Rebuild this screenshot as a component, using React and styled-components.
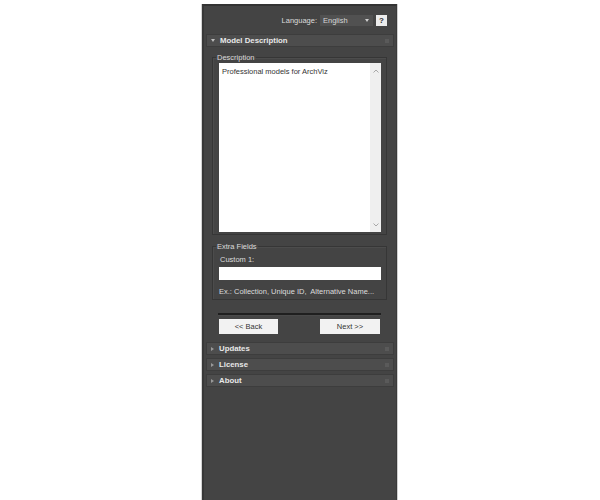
import React from 'react';
import styled, { createGlobalStyle } from 'styled-components';

const GlobalStyle = createGlobalStyle`
  body {
    margin: 0;
    background: #ffffff;
    font-family: "Liberation Sans", Arial, sans-serif;
  }
`;

const Page = styled.div`
  width: 600px;
  height: 500px;
  display: flex;
  padding-left: 202px;
  box-sizing: border-box;
  overflow: hidden;
`;

const Panel = styled.div`
  width: 192px;
  height: 494px;
  margin-top: 4px;
  background: #444444;
  border-top: 2px solid #333333;
  border-left: 2px solid #383838;
  border-right: 1px solid #3a3a3a;
  box-shadow: -1px 0 0 #d4d4d4, 1px 0 0 #cfcfcf;
  display: flex;
  flex-direction: column;
  color: #dcdcdc;
  font-size: 7.5px;
`;

const LangRow = styled.div`
  display: flex;
  justify-content: flex-end;
  align-items: center;
  gap: 3px;
  height: 12px;
  padding: 8px 9px 0 0;
`;

const Select = styled.div`
  width: 53px;
  height: 11px;
  background: #515151;
  display: flex;
  align-items: center;
  justify-content: space-between;
  padding: 0 4px 0 3px;
  box-sizing: border-box;
  color: #d6d6d6;
`;

const Caret = styled.span`
  width: 0;
  height: 0;
  border-left: 2px solid transparent;
  border-right: 2px solid transparent;
  border-top: 3px solid #cfcfcf;
`;

const HelpButton = styled.div`
  width: 11px;
  height: 11px;
  background: #ececec;
  color: #2b2b2b;
  font-weight: bold;
  font-size: 8px;
  display: flex;
  align-items: center;
  justify-content: center;
`;

const Rollout = styled.div`
  margin: ${({ $top }) => $top}px 2px 0 2px;
`;

const RolloutHeader = styled.div`
  height: 13px;
  background: #4d4d4d;
  border: 1px solid #3d3d3d;
  box-sizing: border-box;
  display: flex;
  align-items: center;
  padding: 0 4px 0 4px;
  gap: 5px;
  font-weight: bold;
  font-size: 7.8px;
  color: #e8e8e8;
`;

const Arrow = styled.span`
  width: 0;
  height: 0;
  ${({ $open }) =>
    $open
      ? `border-left: 2px solid transparent; border-right: 2px solid transparent; border-top: 3px solid #bdbdbd;`
      : `border-top: 2px solid transparent; border-bottom: 2px solid transparent; border-left: 3px solid #9a9a9a;`}
`;

const HeaderTitle = styled.span`
  flex: 1;
`;

const Pin = styled.span`
  width: 4px;
  height: 4px;
  background: #5a5a5a;
`;

const RolloutBody = styled.div`
  padding: 6px 7px 0 6px;
  display: flex;
  flex-direction: column;
`;

const Group = styled.fieldset`
  margin: 0 0 ${({ $gap }) => $gap || 0}px 0;
  padding: 1px 5px ${({ $pb }) => $pb || 2}px 6px;
  border: 1px solid #363636;
  box-shadow: inset 1px 1px 0 #4c4c4c;
  min-width: 0;
  display: flex;
  flex-direction: column;
`;

const Legend = styled.legend`
  padding: 0 1px;
  margin-left: -3px;
  font-size: 7.5px;
  color: #dadada;
`;

const TextArea = styled.div`
  height: 169px;
  background: #ffffff;
  display: flex;
  color: #333333;
`;

const TextContent = styled.div`
  flex: 1;
  padding: 4px 3px;
`;

const ScrollBar = styled.div`
  width: 11px;
  background: #efefef;
  display: flex;
  flex-direction: column;
  justify-content: space-between;
  align-items: center;
  padding: 6px 0 5px;
`;

const Chevron = ({ down }) => (
  <svg width="6" height="4" viewBox="0 0 6 4">
    <path
      d={down ? 'M0.5 0.5 L3 3 L5.5 0.5' : 'M0.5 3.5 L3 1 L5.5 3.5'}
      fill="none"
      stroke="#a8a8a8"
      strokeWidth="1"
    />
  </svg>
);

const FieldLabel = styled.div`
  margin: 3px 0 3px 1px;
`;

const Input = styled.div`
  height: 13px;
  background: #ffffff;
`;

const Hint = styled.div`
  margin: 7px 0 0 0;
`;

const Separator = styled.div`
  height: 2px;
  margin: 13px 13px 0 12px;
  background: #1f1f1f;
  border-bottom: 1px solid #4a4a4a;
`;

const ButtonRow = styled.div`
  display: flex;
  justify-content: space-between;
  margin: 3px 14px 0 13px;
`;

const Button = styled.div`
  width: ${({ $w }) => $w}px;
  height: 15px;
  background: #f2f2f2;
  color: #333333;
  display: flex;
  align-items: center;
  justify-content: center;
`;

const collapsed = ['Updates', 'License', 'About'];

const App = () => {
  return (
    <Page>
      <GlobalStyle />
      <Panel>
        <LangRow>
          <span>Language:</span>
          <Select>
            <span>English</span>
            <Caret />
          </Select>
          <HelpButton>?</HelpButton>
        </LangRow>

        <Rollout $top={8}>
          <RolloutHeader>
            <Arrow $open />
            <HeaderTitle>Model Description</HeaderTitle>
            <Pin />
          </RolloutHeader>
          <RolloutBody>
            <Group $gap={7}>
              <Legend>Description</Legend>
              <TextArea>
                <TextContent>Professional models for ArchViz</TextContent>
                <ScrollBar>
                  <Chevron />
                  <Chevron down />
                </ScrollBar>
              </TextArea>
            </Group>
            <Group $pb={3}>
              <Legend>Extra Fields</Legend>
              <FieldLabel>Custom 1:</FieldLabel>
              <Input />
              <Hint>Ex.: Collection, Unique ID,&nbsp; Alternative Name...</Hint>
            </Group>
          </RolloutBody>
          <Separator />
          <ButtonRow>
            <Button $w={59}>&lt;&lt; Back</Button>
            <Button $w={60}>Next &gt;&gt;</Button>
          </ButtonRow>
        </Rollout>

        {collapsed.map((title, i) => (
          <Rollout key={title} $top={i === 0 ? 8 : 3}>
            <RolloutHeader>
              <Arrow />
              <HeaderTitle>{title}</HeaderTitle>
              <Pin />
            </RolloutHeader>
          </Rollout>
        ))}
      </Panel>
    </Page>
  );
};

export default App;
